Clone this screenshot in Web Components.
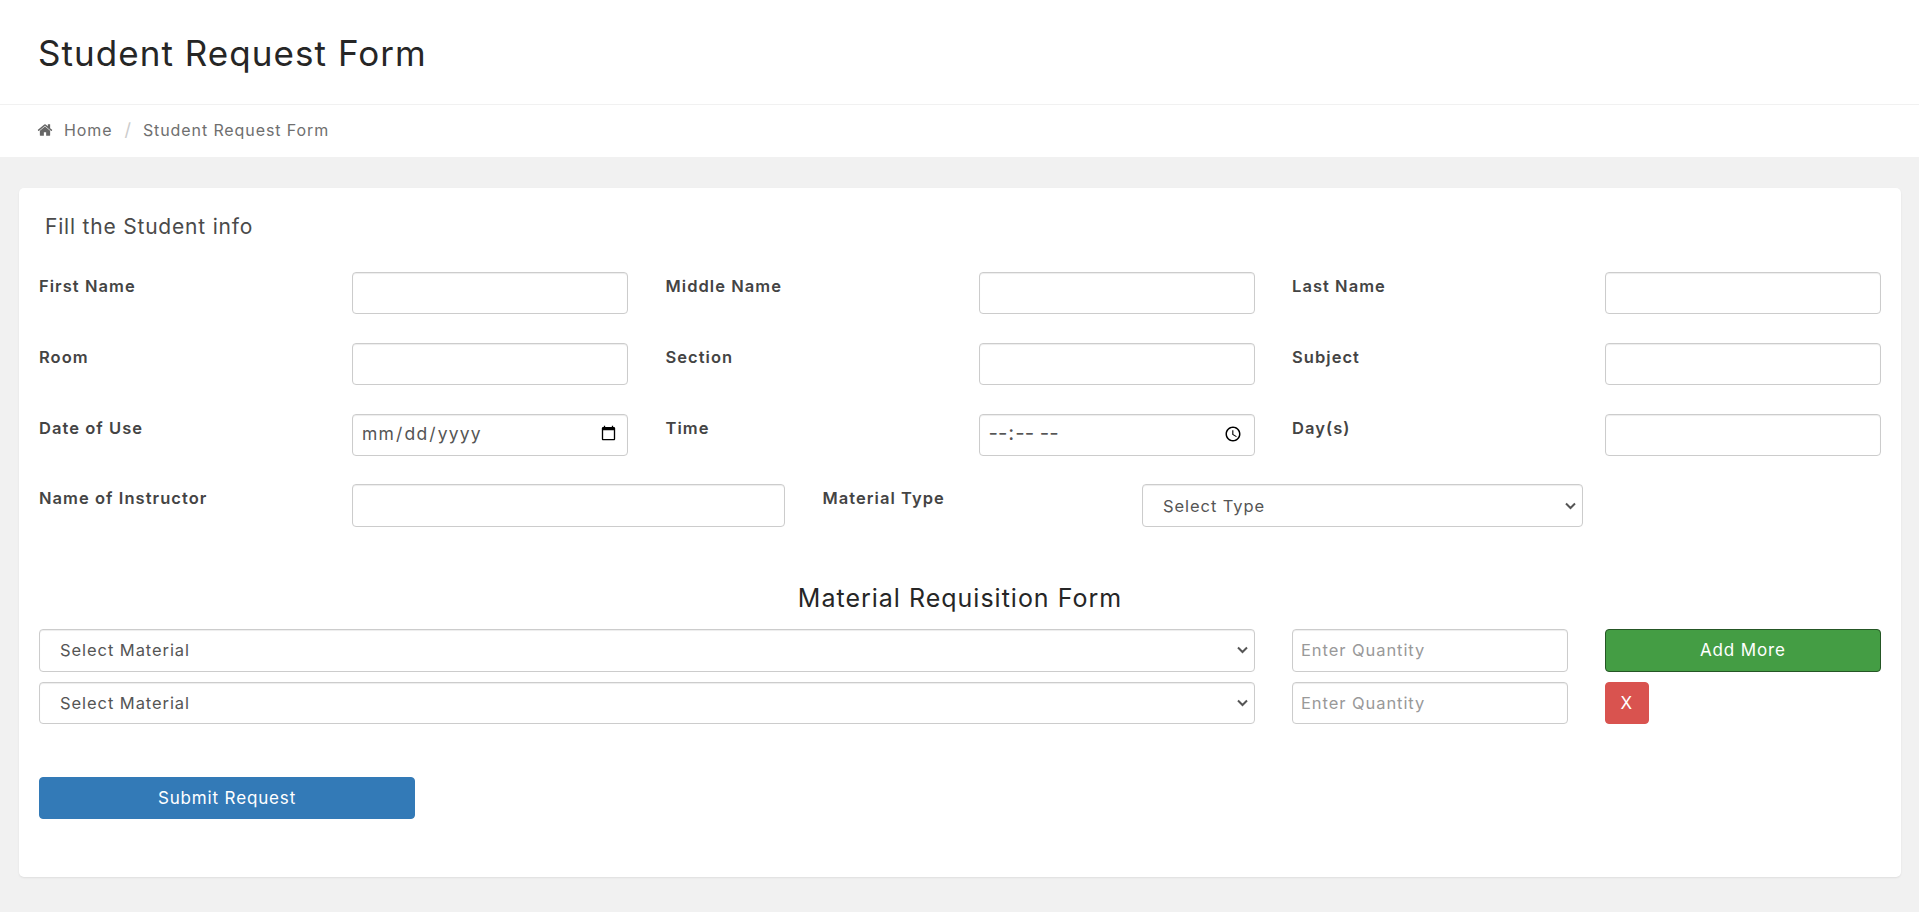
<!DOCTYPE html>
<html lang="en"><head><meta charset="utf-8"><title>Student Request Form</title>
<style>
html,body{margin:0;padding:0;background:#f1f1f1;height:100%;overflow:hidden}
body{font-family:Inter,"Liberation Sans",sans-serif}
</style></head><body>
<page-title text="Student Request Form"></page-title>
<bread-crumb current="Student Request Form"></bread-crumb>
<form-card heading="Fill the Student info">
  <form-row cols="589px 589px 589px">
    <form-field label="First Name"></form-field>
    <form-field label="Middle Name"></form-field>
    <form-field label="Last Name"></form-field>
  </form-row>
  <form-row cols="589px 589px 589px">
    <form-field label="Room"></form-field>
    <form-field label="Section"></form-field>
    <form-field label="Subject"></form-field>
  </form-row>
  <form-row cols="589px 589px 589px">
    <form-field label="Date of Use" type="date"></form-field>
    <form-field label="Time" type="time"></form-field>
    <form-field label="Day(s)"></form-field>
  </form-row>
  <form-row cols="746px 760.5px" last>
    <form-field label="Name of Instructor"></form-field>
    <form-field label="Material Type" type="select" option="Select Type" label-width="319.5px"></form-field>
  </form-row>
  <section-title text="Material Requisition Form"></section-title>
  <form-row cols="1216px 275.8px 276.2px" tight>
    <form-field type="select" option="Select Material"></form-field>
    <form-field placeholder="Enter Quantity"></form-field>
    <action-button tone="green" wide>Add More</action-button>
  </form-row>
  <form-row cols="1216px 275.8px 276.2px" tight>
    <form-field type="select" option="Select Material"></form-field>
    <form-field placeholder="Enter Quantity"></form-field>
    <action-button tone="red">X</action-button>
  </form-row>
  <submit-bar><action-button tone="blue" wide>Submit Request</action-button></submit-bar>
</form-card>
<script>
const def=(n,c)=>customElements.define(n,c);
class Base extends HTMLElement{
  constructor(){super();this.attachShadow({mode:'open'});}
}
def('page-title',class extends Base{connectedCallback(){this.shadowRoot.innerHTML=`<style>
:host{display:block;background:#fff;border-bottom:1px solid #f1f1f1;height:104px;box-sizing:content-box}
h1{margin:0;padding:31px 0 0 38px;font:400 35px/44px Inter,sans-serif;color:#262626;letter-spacing:1.05px}
</style><h1>${this.getAttribute('text')}</h1>`;}});
def('bread-crumb',class extends Base{connectedCallback(){this.shadowRoot.innerHTML=`<style>
:host{display:flex;box-sizing:border-box;align-items:center;background:#fff;height:52px;padding:0 0 2px 37px;font:400 16px/20px Inter,sans-serif;color:#6f6f6f;letter-spacing:.9px}
svg{width:16px;height:16px;fill:#666;margin-right:11px;flex:none}
.sep{color:#ccc;margin:0 12px 0 12px;font-size:18px;letter-spacing:0}
a{color:inherit;text-decoration:none}
</style><svg viewBox="0 0 1792 1792"><path d="M1472 992v480q0 26-19 45t-45 19h-384v-384h-256v384h-384q-26 0-45-19t-19-45v-480q0-1 .5-3t.5-3l575-474 575 474q1 2 1 6zm223-69l-62 74q-8 9-21 11h-3q-13 0-21-7l-692-577-692 577q-12 8-24 7-13-2-21-11l-62-74q-8-10-7-23.500t11-21.500l719-599q32-26 76-26t76 26l244 204v-195q0-14 9-23t23-9h192q14 0 23 9t9 23v408l219 182q10 8 11 21.500t-7 23.500z"/></svg><a>Home</a><span class="sep">/</span><span>${this.getAttribute('current')}</span>`;}});
def('form-card',class extends Base{connectedCallback(){this.shadowRoot.innerHTML=`<style>
:host{display:block;box-sizing:border-box;margin:31px 18px 0 19px;height:689px;background:#fff;border-radius:5px;box-shadow:0 1px 2px rgba(0,0,0,.08);padding:25px 20px 0}
h2{margin:0 0 0 6px;font:400 21px/28px Inter,sans-serif;color:#4a4a4a;letter-spacing:.8px}
.body{margin-top:31px}
</style><h2>${this.getAttribute('heading')}</h2><div class="body"><slot></slot></div>`;}});
def('form-row',class extends Base{connectedCallback(){const t=this.hasAttribute('tight'),l=this.hasAttribute('last');this.shadowRoot.innerHTML=`<style>
:host{display:grid;grid-template-columns:${this.getAttribute('cols')};column-gap:${t?'37px':'37.5px'};margin-bottom:${t?'10.4px':l?'0':'28.5px'}}
</style><slot></slot>`;}});
const chev="url(\"data:image/svg+xml,%3Csvg xmlns='http://www.w3.org/2000/svg' width='11' height='8' viewBox='0 0 11 8'%3E%3Cpath d='M1 1.500l4.500 4.500 4.500-4.500' fill='none' stroke='%23555' stroke-width='2'/%3E%3C/svg%3E\")";
def('form-field',class extends Base{connectedCallback(){
  const type=this.getAttribute('type')||'text',lab=this.getAttribute('label'),ph=this.getAttribute('placeholder')||'',lw=this.getAttribute('label-width')||'313px';
  const ctl=type==='select'?`<select><option>${this.getAttribute('option')}</option></select>`:`<input type="${type}" placeholder="${ph}">`;
  this.shadowRoot.innerHTML=`<style>
:host{display:grid;grid-template-columns:${lab?lw+' 1fr':'1fr'};align-items:start}
label{font:600 16.5px/29px Inter,sans-serif;color:#444;letter-spacing:1.05px}
input,select{box-sizing:border-box;width:100%;height:42.3px;margin:0;background:#fff;border:1px solid #ccc;border-radius:4px;box-shadow:inset 0 1px 1px rgba(0,0,0,.075);font:400 16.5px Inter,sans-serif;color:#555;padding:0 8px;letter-spacing:.93px;outline:0}
select{appearance:none;-webkit-appearance:none;padding:0 24px 0 20px;background:#fff ${chev} no-repeat right 6px center}
input::placeholder{color:#999}
input[type=date]{font-size:17.5px;letter-spacing:1.18px;padding-bottom:2px}
input[type=time]{font-size:17.5px;letter-spacing:0;padding-bottom:2px}
input[type=time]::-webkit-datetime-edit{font-size:20.5px;line-height:1}
</style>${lab?`<label>${lab}</label>`:''}${ctl}`;}});
def('section-title',class extends Base{connectedCallback(){this.shadowRoot.innerHTML=`<style>
:host{display:block;text-align:center;margin:53px 0 0;height:49.6px}
div{font:400 25px/36px Inter,sans-serif;color:#262626;letter-spacing:1px}
</style><div>${this.getAttribute('text')}</div>`;}});
def('action-button',class extends Base{connectedCallback(){
  const c={green:['#449d44','#255625'],red:['#d9534f','#d9534f'],blue:['#337ab7','#337ab7']}[this.getAttribute('tone')];
  const wide=this.hasAttribute('wide');
  this.shadowRoot.innerHTML=`<style>
:host{display:block}
button{display:block;box-sizing:border-box;height:42.3px;width:${wide?'100%':'44px'};padding:0;background:${c[0]};border:1px solid ${c[1]};border-radius:4px;color:#fff;font:400 17px Inter,sans-serif;letter-spacing:.85px}
</style><button><slot></slot></button>`;}});
def('submit-bar',class extends Base{connectedCallback(){this.shadowRoot.innerHTML=`<style>
:host{display:block;width:376px;margin-top:52.9px}
</style><slot></slot>`;}});
</script>
</body></html>
